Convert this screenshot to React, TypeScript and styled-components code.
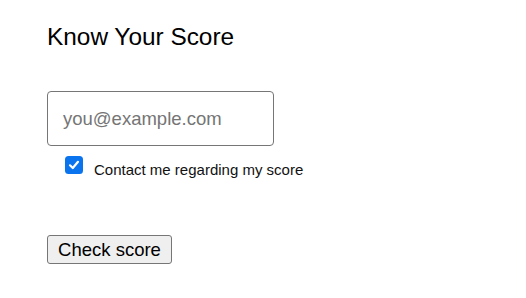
import React from "react";
import styled, { createGlobalStyle } from "styled-components";

const Global = createGlobalStyle`
  html, body { margin: 0; padding: 0; background: #fff; }
  body { font-family: "Liberation Sans", Arial, sans-serif; color: #000; }
`;

const Page = styled.div`
  padding: 22px 0 0 47px;
  display: flex;
  flex-direction: column;
  align-items: flex-start;
`;

const Title = styled.h1`
  margin: 0;
  font-size: 24.4px;
  font-weight: 400;
  line-height: 30px;
`;

const Form = styled.form`
  display: flex;
  flex-direction: column;
  align-items: flex-start;
  margin-top: 39px;
`;

const EmailInput = styled.input`
  box-sizing: border-box;
  width: 227px;
  height: 55px;
  padding: 0 15px;
  border: 1px solid #767676;
  border-radius: 4px;
  font-family: "Liberation Sans", Arial, sans-serif;
  font-size: 18.5px;
  color: #000;
  outline: none;
  &::placeholder { color: #757575; }
`;

const CheckRow = styled.label`
  display: flex;
  align-items: flex-start;
  gap: 11px;
  margin: 10px 0 0 18px;
  font-family: "Liberation Sans", Arial, sans-serif;
  font-size: 15px;
  line-height: 18px;
  color: #111;
`;

const Box = styled.span`
  width: 18px;
  height: 18px;
  border-radius: 3.5px;
  background: #0a74ef;
  display: flex;
  align-items: center;
  justify-content: center;
`;

const LabelText = styled.span`
  margin-top: 5px;
`;

const Submit = styled.button`
  margin-top: 56px;
  box-sizing: border-box;
  width: 125px;
  height: 29px;
  padding: 0;
  background: #efefef;
  border: 1px solid #767676;
  border-radius: 3px;
  font-family: "Liberation Sans", Arial, sans-serif;
  font-size: 18.5px;
  line-height: 27px;
  color: #000;
`;

export default function App() {
  return (
    <>
      <Global />
      <Page>
        <Title>Know Your Score</Title>
        <Form onSubmit={(e) => e.preventDefault()}>
          <EmailInput type="email" placeholder="you@example.com" />
          <CheckRow>
            <Box>
              <svg width="12" height="12" viewBox="0 0 12 12">
                <path d="M2 6.3 L4.8 9 L10 2.8" fill="none" stroke="#fff" strokeWidth="2.2" strokeLinecap="round" strokeLinejoin="round" />
              </svg>
            </Box>
            <LabelText>Contact me regarding my score</LabelText>
          </CheckRow>
          <Submit type="submit">Check score</Submit>
        </Form>
      </Page>
    </>
  );
}
